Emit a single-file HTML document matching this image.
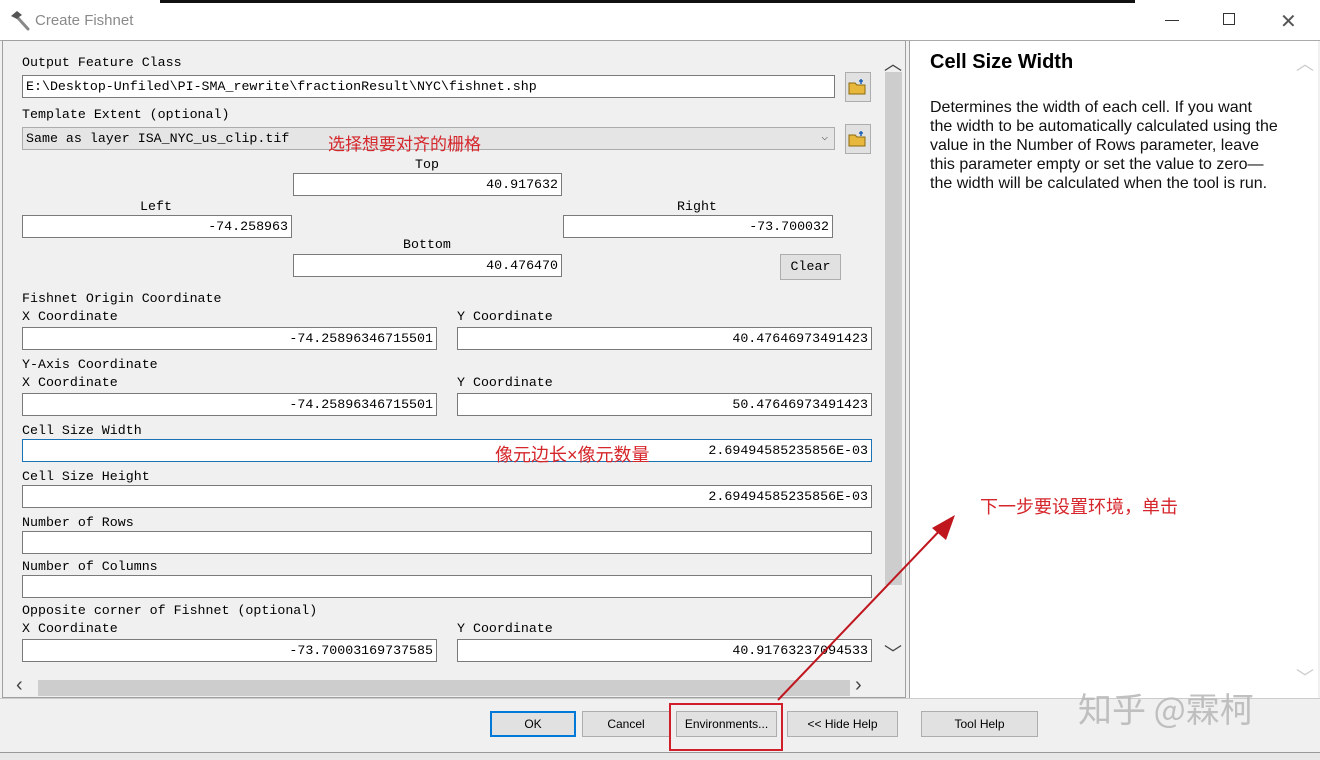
<!DOCTYPE html>
<html><head><meta charset="utf-8"><style>
*{margin:0;padding:0;box-sizing:border-box}
body{width:1320px;height:760px;overflow:hidden;background:#f0f0f0;position:relative;font-family:"Liberation Mono","Noto Sans CJK SC",monospace;font-size:13.3px;color:#000}
.a{position:absolute}
.lbl{position:absolute;font-size:13.3px;line-height:14px;white-space:nowrap}
.in{position:absolute;background:#fff;border:1px solid #7a7a7a;height:23px;text-align:right;padding-right:3px;line-height:21px;white-space:nowrap;font-size:13.3px}
.btn{position:absolute;background:#e1e1e1;border:1px solid #adadad;height:26px;text-align:center;line-height:24px;font-family:"Liberation Sans",sans-serif;font-size:12px}
.fb{position:absolute;width:26px;height:30px;background:#e1e1e1;border:1px solid #adadad}
.red{color:#d5262b;font-family:"Liberation Sans","Noto Sans CJK SC",sans-serif;position:absolute;white-space:nowrap}
</style></head><body>
<div class="a" style="left:0;top:0;width:1320px;height:40px;background:#fff"></div>
<div class="a" style="left:160px;top:0;width:975px;height:3px;background:#111"></div>
<svg class="a" style="left:9px;top:9px" width="22" height="22" viewBox="0 0 22 22"><path d="M9 9 L19 20" stroke="#888" stroke-width="3" stroke-linecap="round"/><path d="M2 7 L8 2 L13 6 L10 8 L8 10 Z" fill="#555"/></svg>
<div class="a" style="left:35px;top:12px;font-family:'Liberation Sans',sans-serif;font-size:15px;color:#8a8a8a">Create Fishnet</div>
<div class="a" style="left:1165px;top:20px;width:14px;height:1px;background:#333"></div>
<div class="a" style="left:1223px;top:13px;width:12px;height:12px;border:1px solid #333"></div>
<div class="a" style="left:1280px;top:9px;font-family:'Liberation Sans',sans-serif;font-size:20px;color:#555">✕</div>
<div class="a" style="left:0;top:40px;width:1320px;height:1px;background:#aaa"></div>
<div class="a" style="left:2px;top:40px;width:904px;height:658px;border:1px solid #a0a0a0;background:#f0f0f0"></div>
<div class="a" style="left:909px;top:41px;width:409px;height:657px;background:#fff;border-left:1px solid #a0a0a0"></div>
<div class="a" style="left:0;top:698px;width:1320px;height:55px;background:#f0f0f0;border-top:1px solid #ccc"></div>
<div class="a" style="left:0;top:752px;width:1320px;height:8px;background:#e8e8e8;border-top:1px solid #999"></div>

<div class="lbl" style="left:22px;top:56px">Output Feature Class</div>
<div class="in" style="left:22px;top:75px;width:813px;text-align:left;padding-left:3px">E:\Desktop-Unfiled\PI-SMA_rewrite\fractionResult\NYC\fishnet.shp</div>
<div class="fb" style="left:845px;top:72px"></div>
<div class="lbl" style="left:22px;top:108px">Template Extent (optional)</div>
<div class="in" style="left:22px;top:127px;width:813px;text-align:left;padding-left:3px;background:#e5e5e5;border-color:#acacac">Same as layer ISA_NYC_us_clip.tif<span style="position:absolute;right:6px;top:0;font-size:11px;color:#555">⌵</span></div>
<div class="fb" style="left:845px;top:124px"></div>
<svg class="a" style="left:848px;top:78px" width="20" height="18"><path d="M1 5h6l2 2h8v9H1z" fill="#e8b83c" stroke="#8a6a10"/><path d="M13 1v5M11 3h4" stroke="#1a5fb4" stroke-width="1.5"/></svg>
<svg class="a" style="left:848px;top:130px" width="20" height="18"><path d="M1 5h6l2 2h8v9H1z" fill="#e8b83c" stroke="#8a6a10"/><path d="M13 1v5M11 3h4" stroke="#1a5fb4" stroke-width="1.5"/></svg>
<div class="red" style="left:328px;top:130px;font-size:17px">选择想要对齐的栅格</div>

<div class="lbl" style="left:415px;top:158px">Top</div>
<div class="in" style="left:293px;top:173px;width:269px">40.917632</div>
<div class="lbl" style="left:140px;top:200px">Left</div>
<div class="in" style="left:22px;top:215px;width:270px">-74.258963</div>
<div class="lbl" style="left:677px;top:200px">Right</div>
<div class="in" style="left:563px;top:215px;width:270px">-73.700032</div>
<div class="lbl" style="left:403px;top:238px">Bottom</div>
<div class="in" style="left:293px;top:254px;width:269px">40.476470</div>
<div class="btn" style="left:780px;top:254px;width:61px;font-family:'Liberation Mono',monospace;font-size:13.3px">Clear</div>

<div class="lbl" style="left:22px;top:292px">Fishnet Origin Coordinate</div>
<div class="lbl" style="left:22px;top:310px">X Coordinate</div>
<div class="lbl" style="left:457px;top:310px">Y Coordinate</div>
<div class="in" style="left:22px;top:327px;width:415px">-74.25896346715501</div>
<div class="in" style="left:457px;top:327px;width:415px">40.47646973491423</div>

<div class="lbl" style="left:22px;top:358px">Y-Axis Coordinate</div>
<div class="lbl" style="left:22px;top:376px">X Coordinate</div>
<div class="lbl" style="left:457px;top:376px">Y Coordinate</div>
<div class="in" style="left:22px;top:393px;width:415px">-74.25896346715501</div>
<div class="in" style="left:457px;top:393px;width:415px">50.47646973491423</div>

<div class="lbl" style="left:22px;top:424px">Cell Size Width</div>
<div class="in" style="left:22px;top:439px;width:850px;border-color:#1a73b5">2.69494585235856E-03</div>
<div class="red" style="left:495px;top:441px;font-size:18px">像元边长×像元数量</div>
<div class="lbl" style="left:22px;top:470px">Cell Size Height</div>
<div class="in" style="left:22px;top:485px;width:850px">2.69494585235856E-03</div>
<div class="lbl" style="left:22px;top:516px">Number of Rows</div>
<div class="in" style="left:22px;top:531px;width:850px"></div>
<div class="lbl" style="left:22px;top:560px">Number of Columns</div>
<div class="in" style="left:22px;top:575px;width:850px"></div>
<div class="lbl" style="left:22px;top:604px">Opposite corner of Fishnet (optional)</div>
<div class="lbl" style="left:22px;top:622px">X Coordinate</div>
<div class="lbl" style="left:457px;top:622px">Y Coordinate</div>
<div class="in" style="left:22px;top:639px;width:415px">-73.70003169737585</div>
<div class="in" style="left:457px;top:639px;width:415px">40.91763237094533</div>

<div class="a" style="left:885px;top:72px;width:17px;height:513px;background:#cdcdcd"></div>
<div class="a" style="left:884px;top:50px;font-family:'Liberation Sans';font-size:18px;color:#444">︿</div>
<div class="a" style="left:884px;top:640px;font-family:'Liberation Sans';font-size:18px;color:#444">﹀</div>
<div class="a" style="left:38px;top:680px;width:812px;height:16px;background:#cdcdcd"></div>
<div class="a" style="left:16px;top:674px;font-family:'Liberation Sans';font-size:20px;color:#444">‹</div>
<div class="a" style="left:855px;top:674px;font-family:'Liberation Sans';font-size:20px;color:#444">›</div>
<div class="a" style="left:1296px;top:50px;font-family:'Liberation Sans';font-size:18px;color:#ccc">︿</div>
<div class="a" style="left:1296px;top:664px;font-family:'Liberation Sans';font-size:18px;color:#ccc">﹀</div>

<div class="a" style="left:930px;top:51px;font-family:'Liberation Sans',sans-serif;font-weight:bold;font-size:20px">Cell Size Width</div>
<div class="a" style="left:930px;top:98px;white-space:nowrap;font-family:'Liberation Sans',sans-serif;font-size:16px;line-height:19px;color:#111">Determines the width of each cell. If you want<br>the width to be automatically calculated using the<br>value in the Number of Rows parameter, leave<br>this parameter empty or set the value to zero—<br>the width will be calculated when the tool is run.</div>
<div class="red" style="left:980px;top:493px;font-size:18px">下一步要设置环境，单击</div>

<div class="btn" style="left:490px;top:711px;width:86px;border:2px solid #0078d7;line-height:22px">OK</div>
<div class="btn" style="left:582px;top:711px;width:88px">Cancel</div>
<div class="btn" style="left:676px;top:711px;width:101px">Environments...</div>
<div class="btn" style="left:787px;top:711px;width:111px">&lt;&lt; Hide Help</div>
<div class="btn" style="left:921px;top:711px;width:117px">Tool Help</div>
<div class="a" style="left:669px;top:703px;width:114px;height:48px;border:2px solid #d01f2a"></div>
<svg class="a" style="left:0;top:0" width="1320" height="760"><line x1="778" y1="700" x2="945" y2="525" stroke="#c0171f" stroke-width="2"/><path d="M955 515 L932 528 L946 540 Z" fill="#c0171f"/></svg>
<div class="a" style="left:1078px;top:683px;font-family:'Noto Sans CJK SC',sans-serif;font-size:34px;color:rgba(185,185,185,0.9);white-space:nowrap">知乎 @霖柯</div>
</body></html>
